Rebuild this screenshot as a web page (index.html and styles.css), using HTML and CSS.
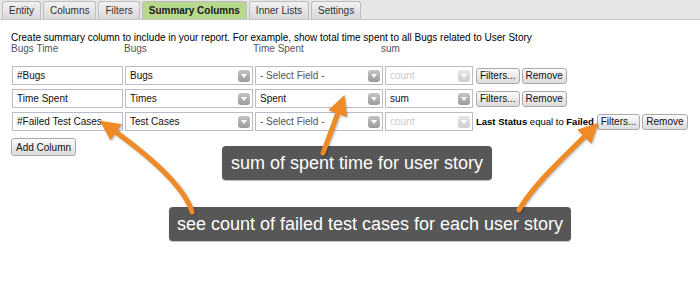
FILE: index.html
```html
<!DOCTYPE html>
<html lang="en">
<head>
    <meta charset="UTF-8">
    <title>Summary Columns</title>
    <link rel="stylesheet" href="styles.css">
</head>
<body>
    <div class="tabs">
        <div class="tab">Entity</div>
        <div class="tab">Columns</div>
        <div class="tab">Filters</div>
        <div class="tab active">Summary Columns</div>
        <div class="tab">Inner Lists</div>
        <div class="tab">Settings</div>
    </div>

    <div class="content">
        <p class="intro">Create summary column to include in your report. For example, show total time spent to all Bugs related to User Story</p>
        <div class="labels">
            <span>Bugs Time</span>
            <span>Bugs</span>
            <span>Time Spent</span>
            <span>sum</span>
        </div>

        <div class="rows">
            <div class="row">
                <div class="field">#Bugs</div>
                <div class="field select"><span>Bugs</span><span class="arrow"></span></div>
                <div class="field select empty"><span>- Select Field -</span><span class="arrow"></span></div>
                <div class="field select disabled"><span>count</span><span class="arrow"></span></div>
                <div class="actions">
                    <button class="btn">Filters...</button>
                    <button class="btn">Remove</button>
                </div>
            </div>
            <div class="row">
                <div class="field">Time Spent</div>
                <div class="field select"><span>Times</span><span class="arrow"></span></div>
                <div class="field select"><span>Spent</span><span class="arrow"></span></div>
                <div class="field select"><span>sum</span><span class="arrow"></span></div>
                <div class="actions">
                    <button class="btn">Filters...</button>
                    <button class="btn">Remove</button>
                </div>
            </div>
            <div class="row">
                <div class="field">#Failed Test Cases</div>
                <div class="field select"><span>Test Cases</span><span class="arrow"></span></div>
                <div class="field select empty"><span>- Select Field -</span><span class="arrow"></span></div>
                <div class="field select disabled"><span>count</span><span class="arrow"></span></div>
                <div class="actions">
                    <span class="filter-desc"><b>Last Status</b> equal to <b>Failed</b></span>
                    <button class="btn">Filters...</button>
                    <button class="btn">Remove</button>
                </div>
            </div>
        </div>

        <button class="btn add">Add Column</button>
    </div>

    <!-- annotation overlay -->
    <div class="callout c1">sum of spent time for user story</div>
    <div class="callout c2">see count of failed test cases for each user story</div>

    <svg class="arrows" width="700" height="295" viewBox="0 0 700 295">
        <defs>
            <marker id="head" viewBox="0 0 10 10" refX="2" refY="5" markerWidth="4" markerHeight="4" orient="auto">
                <path d="M0,0 L10,5 L0,10 z" fill="#ef8a25"/>
            </marker>
        </defs>
        <path d="M323,153 Q332,129 339,110" marker-end="url(#head)"/>
        <path d="M192,212 C183,182 138,148 113,130" marker-end="url(#head)"/>
        <path d="M519,210 C534,184 566,155 587,134" marker-end="url(#head)"/>
    </svg>
</body>
</html>
```

FILE: styles.css
```css
body {
    margin: 0;
    background-color: #fff;
    color: #000;
    font-family: "Liberation Sans", Arial, sans-serif;
    font-size: 10px;
    position: relative;
    width: 700px;
    height: 295px;
    overflow: hidden;
}

.tabs {
    display: flex;
    gap: 2px;
    height: 18px;
    padding: 1px 0 0 2px;
    background-color: #e6e6e6;
    border-bottom: 1px solid #c6c6c6;
}

.tab {
    padding: 0 6px;
    line-height: 17px;
    border: 1px solid #bdbdbd;
    border-bottom: none;
    border-radius: 3px 3px 0 0;
    background: linear-gradient(#f1f1f1, #d8d8d8);
    color: #333;
}

.tab.active {
    background: #b8d98d;
    font-weight: bold;
    color: #1a1a1a;
}

.content {
    padding: 12px 0 0 11px;
}

.intro {
    margin: 0;
    line-height: 11px;
}

.labels {
    display: grid;
    grid-template-columns: 113px 129px 128px auto;
    line-height: 11px;
    color: #555;
}

.rows {
    display: grid;
    row-gap: 4px;
    margin-top: 12px;
    padding-left: 1px;
}

.row {
    display: grid;
    grid-template-columns: 111px 128px 128px 88px auto;
    column-gap: 2px;
    align-items: center;
    height: 19px;
}

.field {
    display: flex;
    align-items: center;
    height: 19px;
    box-sizing: border-box;
    padding: 0 4px;
    border: 1px solid #b9bccb;
    background-color: #fff;
    font-size: 10px;
    color: #111;
}

.select {
    justify-content: space-between;
    padding-right: 2px;
}

.select .arrow {
    width: 12px;
    height: 12px;
    border-radius: 3px;
    background: linear-gradient(#c4c4c4, #9b9b9b);
    position: relative;
}

.select .arrow::after {
    content: "";
    position: absolute;
    left: 3px;
    top: 4px;
    border-left: 3px solid transparent;
    border-right: 3px solid transparent;
    border-top: 4px solid #fff;
}

.select.empty {
    color: #555;
}

.select.disabled {
    color: #cbcbcb;
}

.select.disabled .arrow {
    background: linear-gradient(#e6e6e6, #cfcfcf);
}

.actions {
    display: flex;
    align-items: center;
    gap: 2px;
    margin-left: 1px;
}

.filter-desc {
    margin-right: 1px;
    font-size: 9.5px;
    white-space: nowrap;
}

.btn {
    height: 16px;
    padding: 0 3px;
    border: 1px solid #a9a9a9;
    border-radius: 3px;
    background: linear-gradient(#fbfbfb, #dcdcdc);
    font-family: "Liberation Sans", Arial, sans-serif;
    font-size: 10px;
    color: #111;
}

.btn.add {
    display: block;
    height: 18px;
    margin-top: 7px;
    padding: 0 4px;
}

.callout {
    position: absolute;
    height: 34px;
    line-height: 34px;
    border-radius: 4px;
    background-color: #575757;
    box-shadow: 0 1px 1px rgba(0, 0, 0, 0.25);
    color: #fff;
    font-family: "Liberation Sans", Arial, sans-serif;
    font-size: 18px;
    text-align: center;
}

.c1 {
    left: 222px;
    top: 146px;
    width: 270px;
}

.c2 {
    left: 169px;
    top: 207px;
    width: 402px;
}

.arrows {
    position: absolute;
    left: 0;
    top: 0;
    pointer-events: none;
    filter: drop-shadow(1px 1px 1px rgba(0, 0, 0, 0.3));
}

.arrows path {
    fill: none;
    stroke: #ef8a25;
    stroke-width: 5;
    stroke-linecap: round;
}

.arrows marker path {
    stroke: none;
    fill: #ef8a25;
}
```
